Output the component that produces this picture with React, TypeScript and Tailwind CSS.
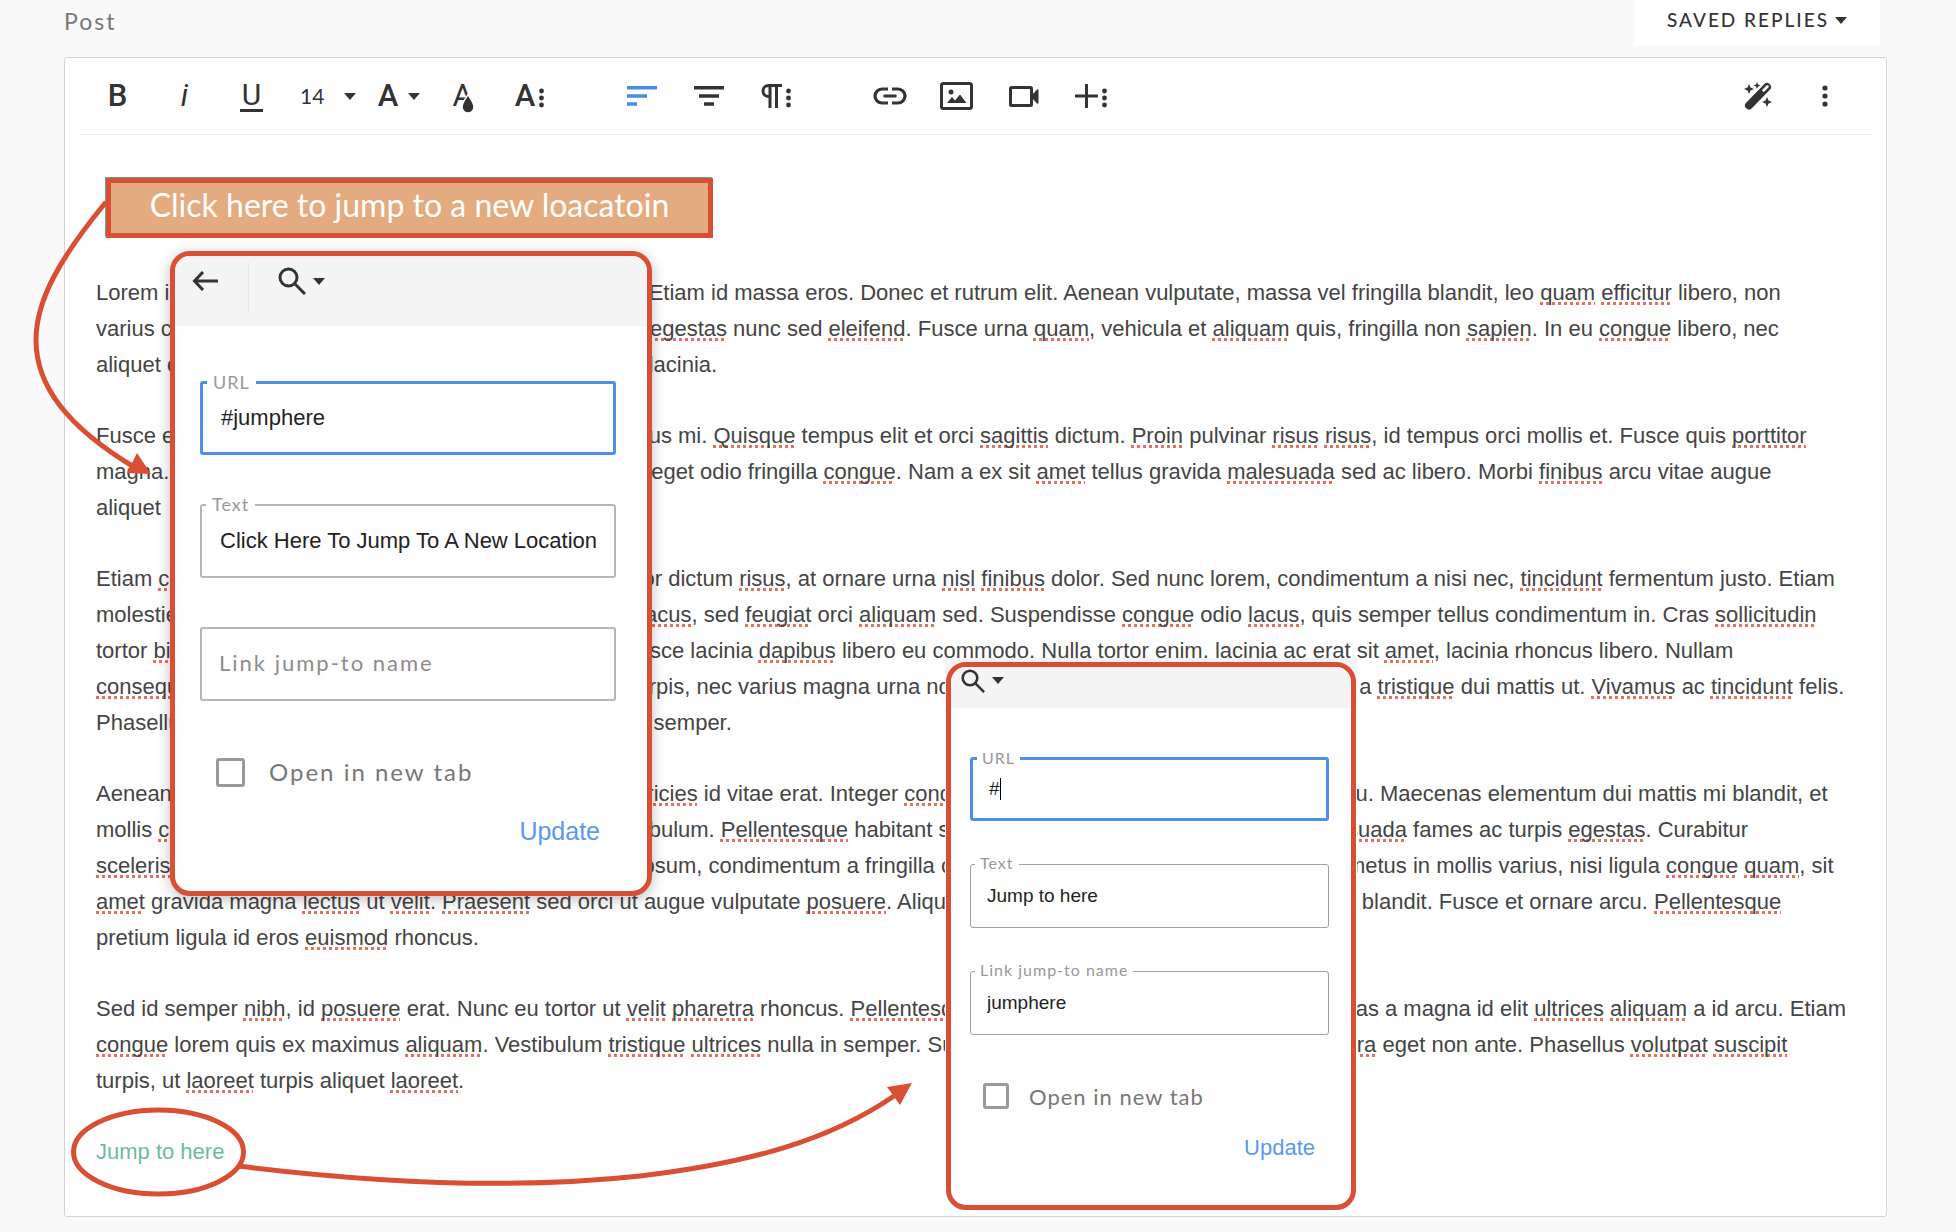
import { useState } from "react";
import type { ReactNode } from "react";

// words between underscores get the spell checker's dotted underline
const paragraphs = [
  [
    "Lorem ipsum dolor sit amet, consectetur adipiscing velit. Etiam id massa eros. Donec et rutrum elit. Aenean vulputate, massa vel fringilla blandit, leo _quam_ _efficitur_ libero, non",
    "varius commodo condimentum magna dignissim nulla et _egestas_ nunc sed _eleifend_. Fusce urna _quam_, vehicula et _aliquam_ quis, fringilla non _sapien_. In eu _congue_ libero, nec",
    "aliquet condimentum dignissim imperdiet massa nunc et lacinia.",
  ],
  [
    "Fusce eget condimentum dignissim commodo massa tellus mi. _Quisque_ tempus elit et orci _sagittis_ dictum. _Proin_ pulvinar _risus_ _risus_, id tempus orci mollis et. Fusce quis _porttitor_",
    "magna. Donec condimentum dignissim imperdiet magna eget odio fringilla _congue_. Nam a ex sit _amet_ tellus gravida _malesuada_ sed ac libero. Morbi _finibus_ arcu vitae augue",
    "aliquet",
  ],
  [
    "Etiam _commodo_ condimentum dignissim quis auctor tortor dictum _risus_, at ornare urna _nisl_ _finibus_ dolor. Sed nunc lorem, condimentum a nisi nec, _tincidunt_ fermentum justo. Etiam",
    "molestie condimentum dignissim imperdiet massa nulla _lacus_, sed _feugiat_ orci _aliquam_ sed. Suspendisse _congue_ odio _lacus_, quis semper tellus condimentum in. Cras _sollicitudin_",
    "tortor _bibendum_ condimentum imperdiet ac dignissim. Fusce lacinia _dapibus_ libero eu commodo. Nulla tortor enim, lacinia ac erat sit _amet_, lacinia rhoncus libero. Nullam",
    "_consequat_ condimentum dignissim sed imperdiet nulla turpis, nec varius magna urna non condimentum dignissim imperdiet tellus a _tristique_ dui mattis ut. _Vivamus_ ac _tincidunt_ felis.",
    "Phasellus condimentum dignissim imperdiet massa nulla semper.",
  ],
  [
    "Aenean condimentum dignissim sed imperdiet sapien _ultricies_ id vitae erat. Integer _condimentum_ dignissim imperdiet nulla nunc eu. Maecenas elementum dui mattis mi blandit, et",
    "mollis _commodo_ condimentum dignissim nunc nulla vestibulum. _Pellentesque_ habitant senectus condimentum tortor sapien _malesuada_ fames ac turpis _egestas_. Curabitur",
    "_scelerisque_ condimentum dignissim et imperdiet auctor ipsum, condimentum a fringilla condimentum dignissim imperdiet magna metus in mollis varius, nisi ligula _congue_ _quam_, sit",
    "_amet_ gravida magna _lectus_ ut _velit_. _Praesent_ sed orci ut augue vulputate _posuere_. Aliquam condimentum dignissim nunc leo _diam_ blandit. Fusce et ornare arcu. _Pellentesque_",
    "pretium ligula id eros _euismod_ rhoncus.",
  ],
  [
    "Sed id semper _nibh_, id _posuere_ erat. Nunc eu tortor ut _velit_ _pharetra_ rhoncus. _Pellentesque_ condimentum dignissim tellus Maecenas a magna id elit _ultrices_ _aliquam_ a id arcu. Etiam",
    "_congue_ lorem quis ex maximus _aliquam_. Vestibulum _tristique_ _ultrices_ nulla in semper. Suspendisse condimentum imperdiet _pharetra_ eget non ante. Phasellus _volutpat_ _suscipit_",
    "turpis, ut _laoreet_ turpis aliquet _laoreet_.",
  ],
];

function Line({ text }: { text: string }) {
  return (
    <span className="block whitespace-nowrap">
      {text.split("_").map((part, i) =>
        i % 2 === 1 ? (
          <span
            key={i}
            className="underline decoration-[#e4705f] decoration-dotted decoration-[3px] underline-offset-2 [text-decoration-skip-ink:none]"
          >
            {part}
          </span>
        ) : (
          part
        )
      )}
    </span>
  );
}

function Caret() {
  return (
    <svg width="12" height="7" viewBox="0 0 12 7" fill="currentColor" className="shrink-0">
      <path d="M0 0h12L6 7z" />
    </svg>
  );
}

function Tool({ label, className = "w-[67px]", children }: { label: string; className?: string; children: ReactNode }) {
  return (
    <button type="button" aria-label={label} className={`flex h-12 shrink-0 items-center justify-center ${className}`}>
      {children}
    </button>
  );
}

function Dots() {
  return (
    <svg width="5" height="24" viewBox="0 0 5 24" fill="currentColor">
      <circle cx="2.5" cy="7" r="2.4" />
      <circle cx="2.5" cy="14" r="2.4" />
      <circle cx="2.5" cy="21" r="2.4" />
    </svg>
  );
}

function Toolbar() {
  return (
    <div className="mx-[15px] flex h-[77px] items-center border-b border-[#ebebeb] pl-1 text-[#333]">
      <Tool label="Bold">
        <span className="font-[Roboto] text-[31px] font-medium leading-8">B</span>
      </Tool>
      <Tool label="Italic">
        <span className="font-[Roboto] text-[31px] italic leading-8">i</span>
      </Tool>
      <Tool label="Underline">
        <span className="border-b-[3px] border-current px-[2px] font-[Roboto] text-[30px] leading-7">U</span>
      </Tool>
      <div className="flex w-[84px] shrink-0 items-center justify-center gap-4">
        <select aria-label="Font size" className="w-[30px] appearance-none bg-transparent pl-[2px] font-[Lato] text-[21px]">
          <option>14</option>
        </select>
        <Caret />
      </div>
      <Tool label="Font family" className="w-[60px] gap-[10px]">
        <span className="font-[Roboto] text-[31px] font-medium leading-8">A</span>
        <Caret />
      </Tool>
      <Tool label="Text color">
        <span className="relative font-[Roboto] text-[31px] leading-8">
          A
          <svg width="14" height="21" viewBox="0 0 14 21" className="absolute left-[9px] top-[13px]">
            <path d="M7 1.5C9 5 13 9.500 13 14A6 6 0 0 1 1 14C1 9.500 5 5 7 1.500Z" fill="#333" stroke="#fff" strokeWidth="1.500" />
          </svg>
        </span>
      </Tool>
      <Tool label="More text" className="w-[67px] gap-1">
        <span className="font-[Roboto] text-[31px] font-medium leading-8">A</span>
        <Dots />
      </Tool>

      <Tool label="Align left" className="ml-[45px] w-[67px] text-[#4a89e8]">
        <svg width="30" height="20" viewBox="0 0 30 20" fill="currentColor">
          <path d="M0 0h30v3.500H0zM0 8.200h20v3.500H0zM0 16.300h10v3.500H0z" />
        </svg>
      </Tool>
      <Tool label="Align center">
        <svg width="30" height="20" viewBox="0 0 30 20" fill="currentColor">
          <path d="M0 0h30v3.500H0zM5 8.200h20v3.500H5zM10 16.300h10v3.500H10z" />
        </svg>
      </Tool>
      <Tool label="Paragraph" className="w-[67px] gap-1">
        <svg width="21" height="24" viewBox="0 0 21 24" fill="none" stroke="currentColor" strokeWidth="3">
          <path d="M21 1.500H7.500A5.500 5.500 0 0 0 7.500 12.500H9M9 1.500V24M15.500 1.500V24" />
        </svg>
        <Dots />
      </Tool>

      <Tool label="Insert link" className="ml-[47px] w-[67px]">
        <svg width="34" height="18" viewBox="0 0 34 18" fill="none" stroke="currentColor" strokeWidth="3.200">
          <path d="M15 2H9A7 7 0 0 0 9 16h6M19 2h6a7 7 0 0 1 0 14h-6M10.500 9h13" />
        </svg>
      </Tool>
      <Tool label="Insert image">
        <svg width="33" height="28" viewBox="0 0 33 28" fill="currentColor">
          <rect x="1.500" y="1.500" width="30" height="25" rx="2" fill="none" stroke="currentColor" strokeWidth="3" />
          <circle cx="11" cy="10" r="2.500" />
          <path d="M7 21l5-6 3 3.500 5-6 6.500 8.500z" />
        </svg>
      </Tool>
      <Tool label="Insert video">
        <svg width="30" height="21" viewBox="0 0 30 21" fill="currentColor">
          <rect x="1.500" y="1.500" width="21" height="18" rx="1" fill="none" stroke="currentColor" strokeWidth="3" />
          <path d="M23 9l5-5.500h1.500v14H28L23 12z" />
        </svg>
      </Tool>
      <Tool label="More rich" className="w-[67px] gap-1">
        <svg width="23" height="24" viewBox="0 0 23 24" stroke="currentColor" strokeWidth="3">
          <path d="M0 12h23M11.500 0v24" />
        </svg>
        <Dots />
      </Tool>

      <Tool label="Code view" className="ml-auto w-[67px]">
        <svg width="28" height="28" viewBox="0 0 28 28" fill="currentColor">
          <path d="M5 23.500L23 5" stroke="currentColor" strokeWidth="8" strokeLinecap="round" />
          <path d="M19.500 8.500L23.500 4.500" stroke="#fff" strokeWidth="2.500" strokeLinecap="round" />
          <path d="M5 2l1.500 3.500L10 7 6.500 8.500 5 12 3.500 8.500 0 7l3.500-1.500zM13 0l1 2.500L16.500 3.500 14 4.500 13 7 12 4.500 9.500 3.500 12 2.500zM23 15l1.500 3.500L28 20l-3.500 1.500L23 25l-1.500-3.500L18 20l3.500-1.500z" />
        </svg>
      </Tool>
      <Tool label="More misc" className="mr-[13px] w-[67px]">
        <svg width="6" height="22" viewBox="0 0 6 22" fill="currentColor">
          <circle cx="3" cy="3" r="2.600" />
          <circle cx="3" cy="11" r="2.600" />
          <circle cx="3" cy="19" r="2.600" />
        </svg>
      </Tool>
    </div>
  );
}

function SearchIcon({ className }: { className: string }) {
  return (
    <svg viewBox="0 0 28 28" fill="none" stroke="currentColor" strokeWidth="3" className={className}>
      <circle cx="10.500" cy="10.500" r="8.500" />
      <path d="M16.500 16.500L27 27" />
    </svg>
  );
}

function LargeField({ id, label, value, active }: { id: string; label: string; value: string; active?: boolean }) {
  const [text, setText] = useState(value);
  return (
    <div className={`relative h-[74px] rounded-[3px] ${active ? "border-[3px] border-[#4f8fe8]" : "border-2 border-[#b5b5b5]"}`}>
      <label
        htmlFor={id}
        className="absolute -top-3 left-1 bg-[#fefefe] px-[6px] font-[Lato] text-[18px] leading-5 tracking-[1px] text-[#999]"
      >
        {label}
      </label>
      <input
        id={id}
        value={text}
        onChange={(e) => setText(e.target.value)}
        className="h-full w-full bg-transparent px-[18px] text-[22px] text-[#222] outline-none"
      />
    </div>
  );
}

function SmallField({ id, label, value, active }: { id: string; label: string; value: string; active?: boolean }) {
  const [text, setText] = useState(value);
  return (
    <div className={`relative h-16 rounded-[3px] ${active ? "border-[3px] border-[#4f8fe8]" : "border border-[#a0a0a0]"}`}>
      <label
        htmlFor={id}
        className="absolute -top-3 left-1 bg-[#fefefe] px-[5px] font-[Lato] text-[16px] leading-5 tracking-[1px] text-[#999]"
      >
        {label}
      </label>
      <div className="flex h-full items-center px-4">
        {active ? (
          <>
            <input
              id={id}
              value={text}
              onChange={(e) => setText(e.target.value)}
              className="w-[11px] bg-transparent text-[19px] text-[#222] outline-none"
            />
            <span className="h-[22px] w-px bg-black" />
          </>
        ) : (
          <input
            id={id}
            value={text}
            onChange={(e) => setText(e.target.value)}
            className="w-full bg-transparent text-[19px] text-[#222] outline-none"
          />
        )}
      </div>
    </div>
  );
}

function JumpFromPopup() {
  const [name, setName] = useState("");
  return (
    <div className="absolute left-[170px] top-[251px] w-[482px] overflow-hidden rounded-[20px] border-[5px] border-[#d94f33] bg-[#fefefe] pb-[44px] shadow-[0_3px_14px_rgba(0,0,0,0.25)]">
      <div className="flex h-[70px] items-start bg-[#f4f4f4] pl-[17px] pt-[6px] text-[#333]">
        <button type="button" aria-label="Back" className="flex h-[38px] items-center">
          <svg width="26" height="20" viewBox="0 0 26 20" fill="none" stroke="currentColor" strokeWidth="3">
            <path d="M26 10H3M11 1L2.500 10L11 19" />
          </svg>
        </button>
        <span className="ml-[30px] h-[51px] w-px bg-[#e8e8e8]" />
        <button type="button" aria-label="Choose link" className="ml-[29px] flex h-[38px] items-center gap-[7px]">
          <SearchIcon className="size-[28px]" />
          <Caret />
        </button>
      </div>
      <div className="flex flex-col pl-[25px] pr-[31px] pt-[55px]">
        <div className="flex flex-col gap-[49px]">
          <LargeField id="url" label="URL" value="#jumphere" active />
          <LargeField id="text" label="Text" value="Click Here To Jump To A New Location" />
          <div className="h-[74px] rounded-[3px] border-2 border-[#b5b5b5]">
            <input
              aria-label="Link jump-to name"
              placeholder="Link jump-to name"
              value={name}
              onChange={(e) => setName(e.target.value)}
              className="h-full w-full bg-transparent px-[17px] pb-1 font-[Lato] text-[22px] tracking-[2px] text-[#333] outline-none placeholder:text-[#8c8c8c]"
            />
          </div>
        </div>
        <label className="ml-4 mt-[56px] flex h-[30px] items-center gap-6 font-[Lato] text-[24px] tracking-[2px] text-[#777]">
          <input type="checkbox" className="size-[29px] appearance-none rounded-[3px] border-[3px] border-[#999] bg-white" />
          Open in new tab
        </label>
        <button type="button" className="mr-4 mt-[28px] self-end text-[25px] leading-8 text-[#5c98ea]">
          Update
        </button>
      </div>
    </div>
  );
}

function JumpToPopup() {
  return (
    <div className="absolute left-[945px] top-[658px] w-[412px] bg-[linear-gradient(#f4f4f4_50px,#fefefe_50px)] px-px pt-1">
      <div className="overflow-hidden rounded-[20px] border-[5px] border-[#d94f33] bg-[#fefefe] pb-[41px]">
        <div className="flex h-[41px] items-start bg-[#f4f4f4] pl-[10px] text-[#333]">
          <button type="button" aria-label="Choose link" className="flex h-[27px] items-center gap-[7px]">
            <SearchIcon className="size-6" />
            <Caret />
          </button>
        </div>
        <div className="flex flex-col pl-[19px] pr-[22px] pt-[49px]">
          <div className="flex flex-col gap-[43px]">
            <SmallField id="url-to" label="URL" value="#" active />
            <SmallField id="text-to" label="Text" value="Jump to here" />
            <SmallField id="name-to" label="Link jump-to name" value="jumphere" />
          </div>
          <label className="ml-[13px] mt-[48px] flex h-[26px] items-center gap-5 font-[Lato] text-[22px] tracking-[1px] text-[#777]">
            <input type="checkbox" className="size-[26px] appearance-none rounded-[3px] border-[3px] border-[#999] bg-white" />
            Open in new tab
          </label>
          <button type="button" className="mr-[14px] mt-[23px] self-end text-[22px] leading-8 text-[#5c98ea]">
            Update
          </button>
        </div>
      </div>
    </div>
  );
}

function Arrows() {
  return (
    <svg className="pointer-events-none absolute inset-0 h-full w-full" fill="none" stroke="#d94f33" strokeWidth="5">
      <path d="M106 202C60 258 36 300 36 340C36 385 66 426 134 467" />
      <path d="M137 453L151 474L127 473Z" fill="#d94f33" stroke="none" />
      <ellipse cx="158.500" cy="1152" rx="85" ry="42" />
      <path d="M238 1166C400 1186 530 1188 640 1176C750 1163 830 1140 894 1096" />
      <path d="M912 1083L887 1087L900 1105Z" fill="#d94f33" stroke="none" />
    </svg>
  );
}

export default function App() {
  return (
    <main className="relative min-h-screen bg-[#f9f9f9] pb-[14px] pl-16 pr-[69px] font-['Liberation_Sans',sans-serif]">
      <header className="flex h-[57px] items-start justify-between">
        <h1 className="pt-[6px] font-[Lato] text-[23px] leading-[30px] tracking-[2px] text-[#777]">Post</h1>
        <button
          type="button"
          className="mr-[7px] flex h-[46px] w-[246px] items-center justify-center gap-[6px] bg-white pb-[5px] font-[Lato] text-[19px] font-medium tracking-[2px] text-[#333]"
        >
          SAVED REPLIES
          <Caret />
        </button>
      </header>

      <section className="rounded-[3px] border border-[#d4d4d4] bg-[#fefefe] pb-[46px]">
        <Toolbar />
        <button
          type="button"
          className="ml-[41px] mt-[43px] flex h-[60px] w-[607px] items-center justify-center border-[5px] border-[#d94f33] bg-[#e3ab7f] pb-[6px] font-[Lato] text-[32px] text-white shadow-[-1px_-1px_0_#5fae93]"
        >
          Click here to jump to a new loacatoin
        </button>
        <div className="ml-[31px] mt-[37px] flex flex-col gap-[35px] text-[22px] leading-9 text-[#444]">
          {paragraphs.map((lines, i) => (
            <p key={i}>
              {lines.map((line) => (
                <Line key={line} text={line} />
              ))}
            </p>
          ))}
          <a href="#jumphere" className="self-start text-[#6dbb9e]">
            Jump to here
          </a>
        </div>
      </section>

      <JumpFromPopup />
      <JumpToPopup />
      <Arrows />
    </main>
  );
}
